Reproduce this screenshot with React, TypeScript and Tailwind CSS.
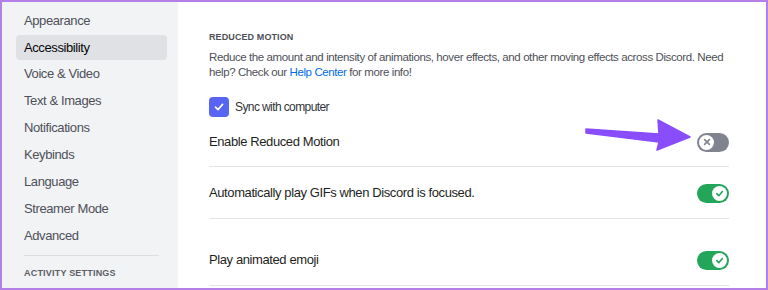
const font = { fontFamily: '"Liberation Sans", Arial, sans-serif' };

const navItems = [
  'Appearance',
  'Accessibility',
  'Voice & Video',
  'Text & Images',
  'Notifications',
  'Keybinds',
  'Language',
  'Streamer Mode',
  'Advanced',
];

const Toggle = ({ on }: { on: boolean }) => (
  <div
    className={`flex h-[19px] w-[32px] shrink-0 items-center rounded-full px-[2px] ${
      on ? 'justify-end bg-[#23a55a]' : 'justify-start bg-[#80848e]'
    }`}
  >
    <div className="flex h-[15px] w-[15px] items-center justify-center rounded-full bg-white">
      {on ? (
        <svg width="9" height="9" viewBox="0 0 10 10">
          <polyline
            points="2,5.2 4.2,7.4 8.2,2.8"
            fill="none"
            stroke="#23a55a"
            strokeWidth="1.8"
            strokeLinecap="round"
            strokeLinejoin="round"
          />
        </svg>
      ) : (
        <svg width="8" height="8" viewBox="0 0 10 10">
          <path
            d="M2 2 L8 8 M8 2 L2 8"
            stroke="#80848e"
            strokeWidth="2"
            strokeLinecap="round"
          />
        </svg>
      )}
    </div>
  </div>
);

const SettingRow = ({
  label,
  on,
  className,
}: {
  label: string;
  on: boolean;
  className: string;
}) => (
  <div
    className={`flex items-center justify-between border-b border-[#e3e5e8] ${className}`}
  >
    <span className="text-[13px] leading-[20px] tracking-[-0.4px] text-[#1e1f22]">
      {label}
    </span>
    <Toggle on={on} />
  </div>
);

function App() {
  return (
    <div
      className="relative flex h-[290px] w-[768px] overflow-hidden border-2 border-[#b57fe8] bg-white"
      style={font}
    >
      <div className="flex w-[176px] shrink-0 flex-col bg-[#f2f3f5] pl-[14px] pt-[6px]">
        {navItems.map((item) => (
          <div
            key={item}
            className={`mb-[1.85px] flex h-[25px] w-[151px] items-center rounded-[4px] px-[8px] text-[13px] tracking-[-0.4px] ${
              item === 'Accessibility'
                ? 'bg-[#dfe1e5] text-[#060607]'
                : 'text-[#4e5058]'
            }`}
          >
            {item}
          </div>
        ))}
        <div className="ml-[8px] mt-[5px] w-[135px] border-t border-[#dcdee2]" />
        <div className="ml-[8px] mt-[11px] text-[9px] font-bold uppercase leading-[12px] tracking-[0.2px] text-[#5c5e66]">
          Activity Settings
        </div>
      </div>

      <div className="flex w-[551px] flex-col pl-[31px]">
        <div className="mt-[29px] text-[9px] font-bold uppercase leading-[12px] tracking-[0.1px] text-[#4e5058]">
          Reduced Motion
        </div>
        <p className="mt-[7px] whitespace-nowrap text-[11.5px] leading-[15px] tracking-[-0.4px] text-[#4e5058]">
          Reduce the amount and intensity of animations, hover effects, and
          other moving effects across Discord. Need
          <br />
          help? Check our <span className="text-[#006ce7]">Help Center</span>{' '}
          for more info!
        </p>
        <div className="mt-[17px] flex h-[20px] items-center gap-[6px]">
          <div className="flex h-[20px] w-[20px] items-center justify-center rounded-[4px] bg-[#5865f2]">
            <svg width="12" height="12" viewBox="0 0 12 12">
              <polyline
                points="2.5,6.2 5,8.6 9.6,3.4"
                fill="none"
                stroke="white"
                strokeWidth="1.6"
                strokeLinecap="round"
                strokeLinejoin="round"
              />
            </svg>
          </div>
          <span className="text-[12px] tracking-[-0.6px] text-[#313338]">
            Sync with computer
          </span>
        </div>
        <SettingRow
          label="Enable Reduced Motion"
          on={false}
          className="pb-[14px] pt-[15px]"
        />
        <SettingRow
          label="Automatically play GIFs when Discord is focused."
          on
          className="pb-[15px] pt-[16px]"
        />
        <SettingRow
          label="Play animated emoji"
          on
          className="pb-[15px] pt-[31px]"
        />
      </div>

      <svg
        className="pointer-events-none absolute left-[-2px] top-[-2px]"
        width="768"
        height="290"
      >
        <polygon
          points="586,129 659,134 658,120 690,137 657,150 659,142 586,133"
          fill="#8a4dfb"
          stroke="#8a4dfb"
          strokeWidth="1.5"
          strokeLinejoin="round"
        />
      </svg>
    </div>
  );
}

export default App;
